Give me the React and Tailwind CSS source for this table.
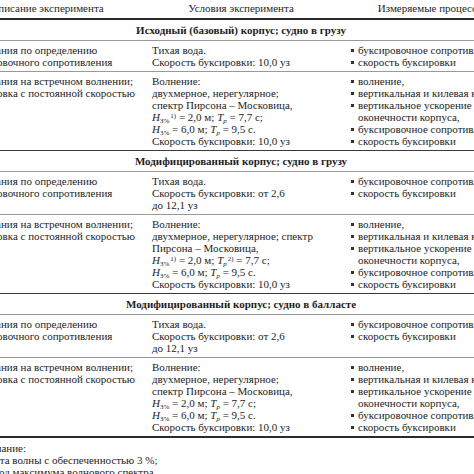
import React from "react";

const Rule = ({ k = "thin" }) =>
  k === "thick" ? (
    <div className="h-[2px] bg-[#2a2a2a]" />
  ) : k === "mid" ? (
    <div className="h-px bg-[#3a3a3a]" />
  ) : (
    <div className="h-px bg-[#9a9a9a]" />
  );

const Hs = ({ sup }) => (
  <>
    <i>H</i>
    <sub className="text-[7px]">3%</sub>
    {sup ? <sup className="text-[7px] ml-[1px]">1)</sup> : null}
  </>
);

const Tp = ({ sup }) => (
  <>
    <i>T</i>
    <sub className="text-[7px] italic">p</sub>
    {sup ? <sup className="text-[7px] ml-[1px]">2)</sup> : null}
  </>
);

const Bullet = ({ children, cont }) => (
  <div className="flex items-center whitespace-nowrap">
    <span className="w-[7px] flex-none flex items-center">
      {cont ? null : <span className="block w-[3px] h-[3px] bg-[#333]" />}
    </span>
    <span>{children}</span>
  </div>
);

const Lines = ({ lines }) => (
  <div>
    {lines.map((l, i) => (
      <div key={i} className="whitespace-nowrap">
        {l}
      </div>
    ))}
  </div>
);

const Row = ({ c1, c2, c3 }) => (
  <div className="grid grid-cols-[190px_190px_190px] py-[3px]">
    <div className="pl-[9px]">
      <Lines lines={c1} />
    </div>
    <div className="pl-[6px]">
      <Lines lines={c2} />
    </div>
    <div className="pl-[15px]">{c3}</div>
  </div>
);

const Heading = ({ children }) => (
  <div className="py-[4px] text-center font-bold">{children}</div>
);

const c1a = ["Испытания по определению", "буксировочного сопротивления"];
const c1b = ["Испытания на встречном волнении;", "буксировка с постоянной скоростью"];

const c3a = (
  <>
    <Bullet>буксировочное сопротивление,</Bullet>
    <Bullet>скорость буксировки</Bullet>
  </>
);

const c3b = (
  <>
    <Bullet>волнение,</Bullet>
    <Bullet>вертикальная и килевая качка,</Bullet>
    <Bullet>вертикальное ускорение в</Bullet>
    <Bullet cont>оконечности корпуса,</Bullet>
    <Bullet>буксировочное сопротивление,</Bullet>
    <Bullet>скорость буксировки</Bullet>
  </>
);

export default function App() {
  return (
    <div className="w-[474px] h-[474px] overflow-hidden bg-white text-[#1e1e1e] font-serif text-[11px] leading-[12px]">
      <div className="w-[570px] -ml-[44px] font-['Liberation_Serif']">
        <div className="grid grid-cols-[190px_190px_190px] pt-[2px] pb-[4px]">
          <div className="text-center pr-[8px]">Описание эксперимента</div>
          <div className="text-center">Условия эксперимента</div>
          <div className="text-center">Измеряемые процессы</div>
        </div>
        <Rule k="thick" />

        <Heading>Исходный (базовый) корпус; судно в грузу</Heading>
        <Rule />
        <Row c1={c1a} c2={["Тихая вода.", "Скорость буксировки: 10,0 уз"]} c3={c3a} />
        <Rule />
        <Row
          c1={c1b}
          c2={[
            "Волнение:",
            "двухмерное, нерегулярное;",
            "спектр Пирсона – Московица,",
            <>
              <Hs sup /> = 2,0 м; <Tp /> = 7,7 с;
            </>,
            <>
              <Hs /> = 6,0 м; <Tp /> = 9,5 с.
            </>,
            "Скорость буксировки: 10,0 уз",
          ]}
          c3={c3b}
        />
        <Rule k="mid" />

        <Heading>Модифицированный корпус; судно в грузу</Heading>
        <Rule />
        <Row
          c1={c1a}
          c2={["Тихая вода.", "Скорость буксировки: от 2,6", "до 12,1 уз"]}
          c3={c3a}
        />
        <Rule />
        <Row
          c1={c1b}
          c2={[
            "Волнение:",
            "двухмерное, нерегулярное; спектр",
            "Пирсона – Московица,",
            <>
              <Hs sup /> = 2,0 м; <Tp sup /> = 7,7 с;
            </>,
            <>
              <Hs /> = 6,0 м; <Tp /> = 9,5 с.
            </>,
            "Скорость буксировки: 10,0 уз",
          ]}
          c3={c3b}
        />
        <Rule k="mid" />

        <Heading>Модифицированный корпус; судно в балласте</Heading>
        <Rule />
        <Row
          c1={c1a}
          c2={["Тихая вода.", "Скорость буксировки: от 2,6", "до 12,1 уз"]}
          c3={c3a}
        />
        <Rule />
        <Row
          c1={c1b}
          c2={[
            "Волнение:",
            "двухмерное, нерегулярное;",
            "спектр Пирсона – Московица,",
            <>
              <Hs /> = 2,0 м; <Tp /> = 7,7 с;
            </>,
            <>
              <Hs /> = 6,0 м; <Tp /> = 9,5 с.
            </>,
            "Скорость буксировки: 10,0 уз",
          ]}
          c3={c3b}
        />
        <Rule k="thick" />

        <div className="pl-[9px] pt-[4px]">
          <div className="whitespace-nowrap">Примечание:</div>
          <div className="whitespace-nowrap">1) высота волны с обеспеченностью 3 %;</div>
          <div className="whitespace-nowrap">2) период максимума волнового спектра</div>
        </div>
      </div>
    </div>
  );
}
